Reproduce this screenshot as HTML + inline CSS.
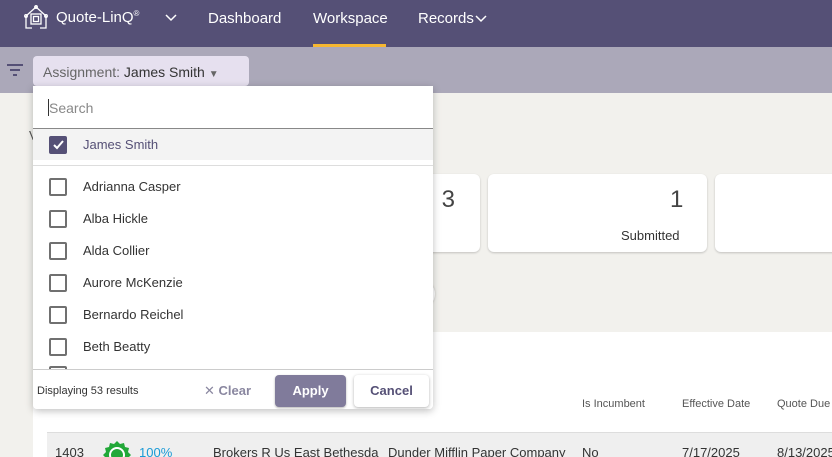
<!DOCTYPE html>
<html><head><style>
*{box-sizing:border-box;margin:0;padding:0}
html,body{width:832px;height:457px;overflow:hidden}
body{background:#f2f1ed;font-family:"Liberation Sans",sans-serif;position:relative;color:#333}
.nav{position:absolute;left:0;top:0;width:832px;height:47px;background:#555076}
.nav .t{position:absolute;color:#fff;font-size:15px;top:10px}
.sub{position:absolute;left:0;top:47px;width:832px;height:46px;background:#aba8b9}
.pill{position:absolute;left:33px;top:56px;width:216px;height:30px;background:#e6e0ef;border-radius:4px;font-size:14px;color:#333;padding:8px 0 0 10px}
.card{position:absolute;top:174px;height:78px;background:#fff;border-radius:6px;box-shadow:0 1px 2px rgba(0,0,0,.2)}
.panel{position:absolute;left:33px;top:332px;width:799px;height:125px;background:#fff}
.dd{position:absolute;left:33px;top:86px;width:400px;height:323px;background:#fff;box-shadow:0 2px 8px rgba(0,0,0,.25);border-radius:0 0 4px 4px;overflow:hidden}
.it{position:absolute;left:0;width:400px;height:32px;font-size:13px;color:#333}
.cb{position:absolute;left:16px;top:8px;width:18px;height:18px;border:2px solid #707070;border-radius:2px}
.it span{position:absolute;left:50px;top:9px}
.th{position:absolute;top:398px;font-size:11px;color:#555}
.td{position:absolute;top:445px;font-size:13px;color:#333}
</style></head><body>
<div class="nav">
<svg style="position:absolute;left:22px;top:4px" width="30" height="28" viewBox="0 0 30 28" fill="none" stroke="#fff" stroke-width="1.3"><path d="M4 12 L14 3 L24 12"/><rect x="9" y="10" width="10" height="10"/><rect x="11.5" y="12.5" width="5" height="5"/><path d="M4 12v12h6M24 12v12h-6"/><circle cx="14" cy="3" r="1.3"/><circle cx="4" cy="12" r="1.3"/><circle cx="24" cy="12" r="1.3"/></svg>
<div class="t" style="left:56px;top:9px;font-size:15px">Quote-LinQ<sup style="font-size:8px">®</sup></div>
<svg style="position:absolute;left:165px;top:14px" width="12" height="8"><path d="M1 1l5 5 5-5" stroke="#fff" stroke-width="1.5" fill="none"/></svg>
<div class="t" style="left:208px">Dashboard</div>
<div class="t" style="left:313px">Workspace</div>
<div style="position:absolute;left:313px;top:44px;width:73px;height:3px;background:#f6b731"></div>
<div class="t" style="left:418px">Records</div>
<svg style="position:absolute;left:475px;top:15px" width="12" height="8"><path d="M1 1l5 5 5-5" stroke="#fff" stroke-width="1.5" fill="none"/></svg>
</div>
<div class="sub">
<svg style="position:absolute;left:6px;top:17px" width="18" height="14"><path d="M1 1h16M4 6h10M7 11h4" stroke="#555076" stroke-width="2"/></svg>
</div>
<div class="pill"><span style="color:#666">Assignment:</span> James Smith <span style="font-size:10px;color:#666">▼</span></div>
<div style="position:absolute;left:29px;top:128px;font-size:13px;color:#555">V</div>
<div class="card" style="left:300px;width:180px"><div style="position:absolute;right:25px;top:12px;font-size:24px;color:#444">3</div><div style="position:absolute;left:112px;top:55px;font-size:13px">ting</div></div>
<div class="card" style="left:488px;width:219px"><div style="position:absolute;left:182px;top:12px;font-size:24px;color:#444">1</div><div style="position:absolute;left:133px;top:54px;font-size:13px">Submitted</div></div>
<div class="card" style="left:715px;width:130px"></div>
<div style="position:absolute;left:400px;top:280px;width:35px;height:28px;border-radius:14px;background:#fff;box-shadow:0 0 2px rgba(0,0,0,.2)"></div>
<div class="panel"></div>
<div class="th" style="left:582px">Is Incumbent</div>
<div class="th" style="left:682px">Effective Date</div>
<div class="th" style="left:777px">Quote Due</div>
<div style="position:absolute;left:47px;top:432px;width:785px;height:25px;background:#efefef;border-top:1px solid #ddd"></div>
<div class="td" style="left:55px">1403</div>
<svg style="position:absolute;left:103px;top:441px" width="28" height="28" viewBox="0 0 28 28"><path d="M14 0l3 3 4-1 1 4 4 1-1 4 3 3-3 3 1 4-4 1-1 4-4-1-3 3-3-3-4 1-1-4-4-1 1-4-3-3 3-3-1-4 4-1 1-4 4 1z" fill="#22a838"/><circle cx="14" cy="14" r="7" fill="none" stroke="#fff" stroke-width="2"/></svg>
<div class="td" style="left:139px;color:#1a9ad6">100%</div>
<div class="td" style="left:213px">Brokers R Us East Bethesda</div>
<div class="td" style="left:388px">Dunder Mifflin Paper Company</div>
<div class="td" style="left:582px">No</div>
<div class="td" style="left:682px">7/17/2025</div>
<div class="td" style="left:777px">8/13/2025</div>
<div class="dd">
<div style="position:absolute;left:16px;top:14px;font-size:14px;color:#888">Search</div>
<div style="position:absolute;left:15px;top:13px;width:1px;height:17px;background:#333"></div>
<div style="position:absolute;left:0;top:42px;width:400px;height:1px;background:#888"></div>
<div class="it" style="top:43px;height:31px;background:#f3f3f3"><div class="cb" style="background:#555076;border-color:#555076;top:7px"><svg width="14" height="14" style="position:absolute;left:0;top:0"><path d="M3 7l3 3 6-7" stroke="#fff" stroke-width="2" fill="none"/></svg></div><span style="color:#555076;top:8px">James Smith</span></div>
<div style="position:absolute;left:0;top:79px;width:400px;height:1px;background:#ddd"></div>
<div class="it" style="top:84px"><div class="cb"></div><span>Adrianna Casper</span></div>
<div class="it" style="top:116px"><div class="cb"></div><span>Alba Hickle</span></div>
<div class="it" style="top:148px"><div class="cb"></div><span>Alda Collier</span></div>
<div class="it" style="top:180px"><div class="cb"></div><span>Aurore McKenzie</span></div>
<div class="it" style="top:212px"><div class="cb"></div><span>Bernardo Reichel</span></div>
<div class="it" style="top:244px"><div class="cb"></div><span>Beth Beatty</span></div>
<div class="it" style="top:276px"><div class="cb" style="top:4px"></div></div>
<div style="position:absolute;left:0;top:283px;width:400px;height:40px;background:#fff;border-top:1px solid #ccc"></div>
<div style="position:absolute;left:4px;top:299px;font-size:11px;color:#333">Displaying 53 results</div>
<div style="position:absolute;left:171px;top:297px;font-size:13px;color:#8a87a0;font-weight:bold"><span style="font-weight:normal">✕</span> Clear</div>
<div style="position:absolute;left:242px;top:289px;width:71px;height:32px;background:#807b9b;border-radius:4px;color:#fff;font-size:13px;font-weight:bold;text-align:center;line-height:32px;box-shadow:0 1px 2px rgba(0,0,0,.3)">Apply</div>
<div style="position:absolute;left:321px;top:289px;width:75px;height:32px;background:#fff;border-radius:4px;color:#555076;font-size:13px;font-weight:bold;text-align:center;line-height:32px;box-shadow:0 1px 3px rgba(0,0,0,.3)">Cancel</div>
</div>
</body></html>
